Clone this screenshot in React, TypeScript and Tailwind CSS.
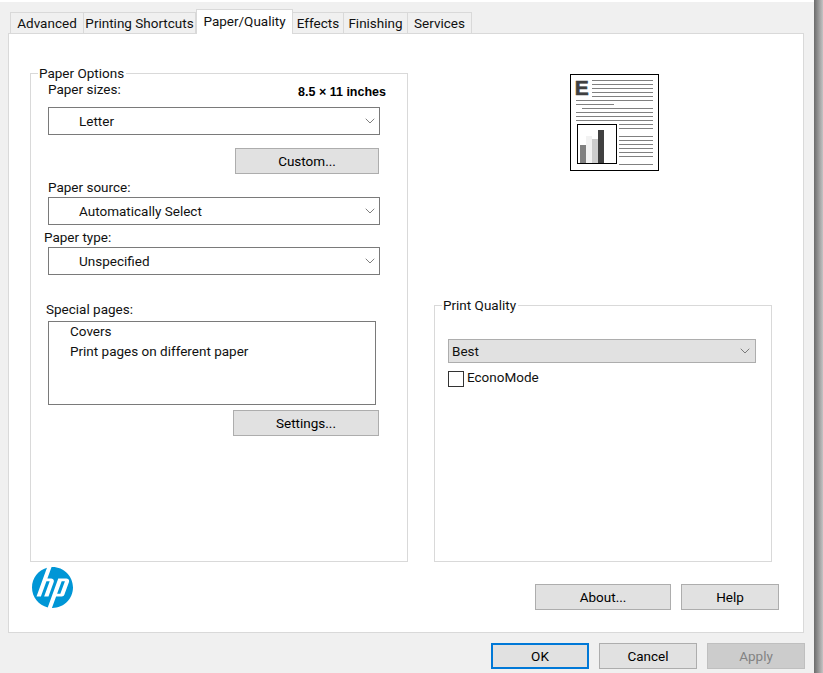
import React from 'react';
import { ChevronDown } from 'lucide-react';
import { SiHp } from 'react-icons/si';

const tabs = [
  { label: 'Advanced', width: 'w-[74px] border-l' },
  { label: 'Printing Shortcuts', width: 'w-[112px]' },
  { label: 'Paper/Quality', width: 'w-[97px]', active: true },
  { label: 'Effects', width: 'w-[51px]' },
  { label: 'Finishing', width: 'w-[64px]' },
  { label: 'Services', width: 'w-[64px]' },
];

const Button = ({ label, className = '' }: { label: string; className?: string }) => (
  <button type="button" className={`h-[26px] shrink-0 bg-[#e1e1e1] text-center text-black ${className}`}>
    {label}
  </button>
);

const Select = ({ label }: { label: string }) => (
  <div className="flex h-[28px] w-[332px] items-center justify-between border border-[#7a7a7a] bg-white pl-[30px] pr-[1px]">
    <span>{label}</span>
    <ChevronDown className="h-[16px] w-[16px] text-[#606060]" strokeWidth={1.2} />
  </div>
);

const Legend = ({ label, className = '' }: { label: string; className?: string }) => (
  <span className={`absolute top-[-9px] bg-white pl-[1px] pr-[2px] leading-[16px] ${className}`}>{label}</span>
);

// Miniatura de la hoja con el gráfico de barras
const PagePreview = () => {
  const topLines = [6.5, 10.5, 14.5, 18.5, 22.5];
  const fullLines = [26.5, 38.5, 42.5, 46.5];
  const sideLines = [50.5, 54.5, 62.5, 66.5, 70.5, 74.5, 78.5, 82.5, 90.5];
  return (
    <svg width="89" height="97" viewBox="0 0 89 97" className="block">
      <rect x="0.5" y="0.5" width="88" height="96" fill="#fff" stroke="#000" />
      <text
        x="4.8"
        y="21"
        fontFamily="Liberation Sans, sans-serif"
        fontWeight="700"
        fontSize="21"
        fill="#404040"
        stroke="#404040"
        strokeWidth="0.6"
      >
        E
      </text>
      <g stroke="#808080">
        {topLines.map((y) => (
          <line key={y} x1="22" x2="83" y1={y} y2={y} />
        ))}
        {fullLines.map((y) => (
          <line key={y} x1="6" x2="83" y1={y} y2={y} />
        ))}
        {sideLines.map((y) => (
          <line key={y} x1="49" x2="83" y1={y} y2={y} />
        ))}
        <line x1="6" x2="44" y1="30.5" y2="30.5" />
        <line x1="12" x2="83" y1="34.5" y2="34.5" />
      </g>
      <rect x="7.5" y="50.5" width="39" height="39" fill="#fff" stroke="#000" />
      <rect x="10" y="71" width="6" height="18" fill="#808080" />
      <rect x="16" y="62" width="6" height="27" fill="#f2f2f2" />
      <rect x="22" y="65" width="6" height="24" fill="#cccccc" />
      <rect x="28" y="56" width="6" height="33" fill="#404040" />
    </svg>
  );
};

export default function App() {
  return (
    <div className="flex h-[673px] w-[823px] overflow-hidden bg-white font-['Roboto',sans-serif] text-[13.5px] text-[#111111]">
      <div className="mt-[2px] h-[671px] w-[814px] shrink-0 bg-[#f0f0f0] pl-[8px] pt-[7px]">
        {/* Pestañas */}
        <div className="relative z-10 flex h-[24px] items-end whitespace-nowrap pl-[2px]">
          {tabs.map((tab) =>
            tab.active ? (
              <div
                key={tab.label}
                className={`-mb-px h-[25px] ${tab.width} border border-b-0 border-[#d9d9d9] bg-white text-center leading-[22px]`}
              >
                {tab.label}
              </div>
            ) : (
              <div
                key={tab.label}
                className={`h-[21px] ${tab.width} border-r border-t border-[#d9d9d9] text-center leading-[20px]`}
              >
                {tab.label}
              </div>
            ),
          )}
        </div>

        {/* Panel principal */}
        <div className="h-[600px] w-[796px] border border-[#d9d9d9] bg-white pl-[21px] pt-[39px]">
          <div className="flex">
            {/* Paper Options */}
            <div className="relative h-[489px] w-[378px] border border-[#d9d9d9] pl-[17px]">
              <Legend label="Paper Options" className="left-[7px]" />
              <div className="mt-[5px] flex h-[20px] w-[338px] items-center justify-between">
                <span>Paper sizes:</span>
                <span className="mt-[6px] font-['Liberation_Sans',sans-serif] text-[12.5px] font-bold text-black">8.5 × 11 inches</span>
              </div>
              <div className="mt-[8px]">
                <Select label="Letter" />
              </div>
              <div className="mt-[13px] flex w-[331px] justify-end">
                <Button label="Custom..." className="w-[144px] border border-[#adadad]" />
              </div>
              <div className="mt-[3px] h-[20px] leading-[20px]">Paper source:</div>
              <Select label="Automatically Select" />
              <div className="-ml-[4px] mt-[2px] h-[20px] leading-[20px]">Paper type:</div>
              <Select label="Unspecified" />
              <div className="-ml-[2px] mt-[24px] h-[20px] leading-[20px]">Special pages:</div>
              <div className="mt-[2px] h-[84px] w-[328px] border border-[#7a7a7a] pl-[21px] leading-[20px]">
                <div className="-mt-px">Covers</div>
                <div>Print pages on different paper</div>
              </div>
              <div className="mt-[5px] flex w-[331px] justify-end">
                <Button label="Settings..." className="w-[146px] border border-[#adadad]" />
              </div>
            </div>

            {/* Columna derecha */}
            <div className="ml-[26px] flex w-[338px] flex-col">
              <div className="ml-[136px] mt-px">
                <PagePreview />
              </div>
              <div className="relative mt-[134px] h-[257px] border border-[#d9d9d9] pl-[13px]">
                <Legend label="Print Quality" className="left-[7px]" />
                <div className="mt-[33px] flex h-[24px] w-[308px] items-center justify-between border border-[#adadad] bg-[#e1e1e1] pl-[3px] pr-[2px]">
                  <span>Best</span>
                  <ChevronDown className="h-[16px] w-[16px] text-[#606060]" strokeWidth={1.2} />
                </div>
                <div className="mt-[8px] flex h-[16px] items-center">
                  <span className="h-[16px] w-[16px] border border-[#333333] bg-white" />
                  <span className="ml-[3px] -mt-[3px]">EconoMode</span>
                </div>
              </div>
            </div>
          </div>

          {/* Logo y botones inferiores */}
          <div className="mt-[5px] flex items-start">
            <SiHp className="ml-[2px] h-[41px] w-[41px] text-[#0096d6]" />
            <div className="ml-[462px] mt-[17px] flex gap-[10px]">
              <Button label="About..." className="w-[136px] border border-[#adadad]" />
              <Button label="Help" className="w-[98px] border border-[#adadad]" />
            </div>
          </div>
        </div>

        {/* Botones del diálogo */}
        <div className="mt-[10px] flex gap-[10px] pl-[483px]">
          <Button label="OK" className="w-[98px] border-2 border-[#0078d7]" />
          <Button label="Cancel" className="w-[98px] border border-[#adadad]" />
          <button
            type="button"
            className="h-[26px] w-[98px] shrink-0 border border-[#bfbfbf] bg-[#cccccc] text-center text-[#838383]"
          >
            Apply
          </button>
        </div>
      </div>

      {/* Sombra de la ventana */}
      <div className="h-full w-[9px] shrink-0 bg-gradient-to-r from-[#6b6b6b] to-[#c4c4c4]" />
    </div>
  );
}
